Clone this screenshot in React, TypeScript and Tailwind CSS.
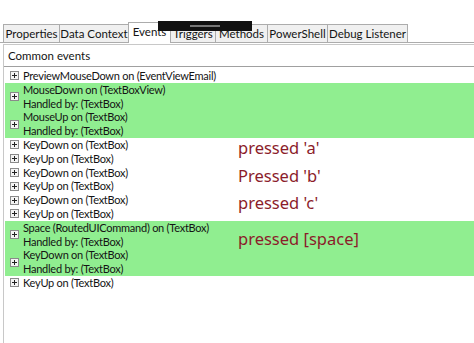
import React from "react";

type Ev = { text: string; handled?: boolean };

const tabs = [
  { t: "Properties", w: "w-[57px]" },
  { t: "Data Context", w: "w-[70px]" },
  { t: "Events", w: "w-[43px]" },
  { t: "Triggers", w: "w-[46px]" },
  { t: "Methods", w: "w-[53px]" },
  { t: "PowerShell", w: "w-[61px]" },
  { t: "Debug Listener", w: "w-[81px]" },
];

const events: Ev[] = [
  { text: "PreviewMouseDown on (EventViewEmail)" },
  { text: "MouseDown on (TextBoxView)", handled: true },
  { text: "MouseUp on (TextBox)", handled: true },
  { text: "KeyDown on (TextBox)" },
  { text: "KeyUp on (TextBox)" },
  { text: "KeyDown on (TextBox)" },
  { text: "KeyUp on (TextBox)" },
  { text: "KeyDown on (TextBox)" },
  { text: "KeyUp on (TextBox)" },
  { text: "Space (RoutedUICommand) on (TextBox)", handled: true },
  { text: "KeyDown on (TextBox)", handled: true },
  { text: "KeyUp on (TextBox)" },
];

const notes = [
  { text: "pressed 'a'", pos: "top-[137px]" },
  { text: "Pressed 'b'", pos: "top-[165px]" },
  { text: "pressed 'c'", pos: "top-[192px]" },
  { text: "pressed [space]", pos: "top-[228px]" },
];

function Expander() {
  return (
    <svg width="9" height="9" viewBox="0 0 9 9" className="shrink-0">
      <rect x="0.5" y="0.5" width="8" height="8" fill="#f4f4f4" stroke="#8a8a8a" />
      <path d="M2 4.5h5M4.5 2v5" stroke="#222" strokeWidth="1" />
    </svg>
  );
}

function EventRow({ ev }: { ev: Ev }) {
  return (
    <div className={ev.handled ? "flex items-center bg-[#90ee90]" : "flex items-center"}>
      <div className="w-[18px] pl-[5px] flex items-center">
        <Expander />
      </div>
      <div className="flex flex-col whitespace-nowrap tracking-[-0.25px]">
        <span>{ev.text}</span>
        {ev.handled && <span>Handled by: (TextBox)</span>}
      </div>
    </div>
  );
}

export default function App() {
  return (
    <div className="relative w-[474px] h-[343px] bg-white overflow-hidden flex flex-col font-[family-name:Lato,sans-serif] text-[11px] leading-[13.8px] text-[#141414]">
      <div className="h-[23px] shrink-0" />
      {/* tab strip */}
      <div className="flex items-end h-[20px] shrink-0 pl-[3px] border-b border-[#acacac] text-[11.5px]">
        {tabs.map(({ t, w }) =>
          t === "Events" ? (
            <div key={t} className={`${w} h-[21px] -mb-px -ml-px bg-white border border-b-0 border-[#acacac] flex justify-center pt-[2px] whitespace-nowrap`}>
              {t}
            </div>
          ) : (
            <div key={t} className={`${w} h-[18px] bg-[#f0f0f0] border border-b-0 border-[#acacac] -ml-px first:ml-0 flex items-center justify-center whitespace-nowrap`}>
              {t}
            </div>
          )
        )}
      </div>
      {/* panel */}
      <div className="flex-1 ml-[3px] border-l border-t border-[#c8c8c8] mt-px">
        <div className="h-[22px] flex items-center pl-[4px] border-b border-[#a0a0a0] text-[11.5px]">Common events</div>
        <div className="pt-[2px] pl-px">
          {events.map((ev, i) => (
            <EventRow key={i} ev={ev} />
          ))}
        </div>
      </div>
      {/* drag handle overlay */}
      <div className="absolute left-[158px] top-[21px] w-[94px] h-[10px] bg-[#111] flex items-center justify-center">
        <div className="w-[30px] h-[2px] bg-[#777]" />
      </div>
      {/* annotations */}
      {notes.map((n) => (
        <div key={n.text} className={`absolute left-[238px] ${n.pos} text-[16.5px] leading-[22px] text-[#8b1c2a] font-[family-name:'Noto_Sans',sans-serif]`}>
          {n.text}
        </div>
      ))}
    </div>
  );
}
